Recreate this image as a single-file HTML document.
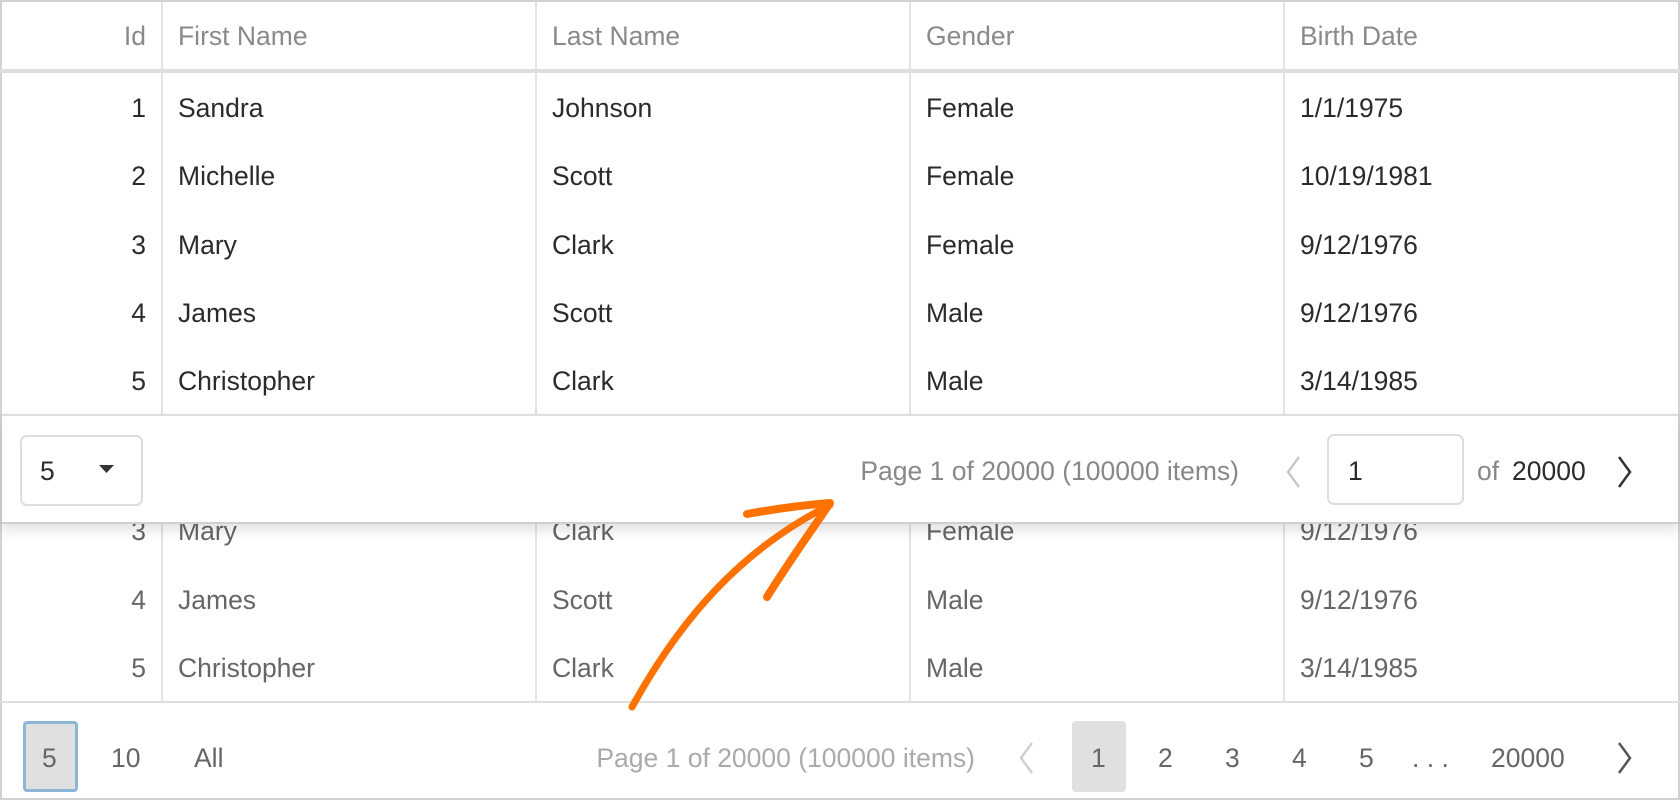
<!DOCTYPE html>
<html><head><meta charset="utf-8"><style>
*{margin:0;padding:0;box-sizing:border-box}
body{width:1680px;height:800px;background:#fff;font-family:"Liberation Sans",sans-serif;position:relative;overflow:hidden}
.frame{position:absolute;left:0;top:0;width:1680px;height:800px;border:2px solid #d2d2d2}
.t{position:absolute;font-size:26.5px;line-height:30px;white-space:nowrap;transform:translateY(-50%)}
.h{color:#8a8a8a}
.d{color:#2b2b2b}
.f{color:#666}
.vl{position:absolute;width:2px;background:#e4e4e4}
.hl{position:absolute;left:0;width:1680px;background:#dedede}
.r{text-align:right}
svg{position:absolute}
</style></head><body>
<div class="frame"></div>
<div class="vl" style="left:161px;top:2px;height:413px"></div>
<div class="vl" style="left:535px;top:2px;height:413px"></div>
<div class="vl" style="left:909px;top:2px;height:413px"></div>
<div class="vl" style="left:1283px;top:2px;height:413px"></div>
<div class="vl" style="left:161px;top:523px;height:179px"></div>
<div class="vl" style="left:535px;top:523px;height:179px"></div>
<div class="vl" style="left:909px;top:523px;height:179px"></div>
<div class="vl" style="left:1283px;top:523px;height:179px"></div>
<div class="hl" style="top:69px;height:4px"></div>
<div class="hl" style="top:701px;height:2px"></div>

<div class="t h r" style="right:1534px;top:36px">Id</div>
<div class="t h" style="left:178px;top:36px">First Name</div>
<div class="t h" style="left:552px;top:36px">Last Name</div>
<div class="t h" style="left:926px;top:36px">Gender</div>
<div class="t h" style="left:1300px;top:36px">Birth Date</div>

<div class="t d" style="right:1534px;top:108px">1</div><div class="t d" style="left:178px;top:108px">Sandra</div><div class="t d" style="left:552px;top:108px">Johnson</div><div class="t d" style="left:926px;top:108px">Female</div><div class="t d" style="left:1300px;top:108px">1/1/1975</div>
<div class="t d" style="right:1534px;top:176px">2</div><div class="t d" style="left:178px;top:176px">Michelle</div><div class="t d" style="left:552px;top:176px">Scott</div><div class="t d" style="left:926px;top:176px">Female</div><div class="t d" style="left:1300px;top:176px">10/19/1981</div>
<div class="t d" style="right:1534px;top:245px">3</div><div class="t d" style="left:178px;top:245px">Mary</div><div class="t d" style="left:552px;top:245px">Clark</div><div class="t d" style="left:926px;top:245px">Female</div><div class="t d" style="left:1300px;top:245px">9/12/1976</div>
<div class="t d" style="right:1534px;top:313px">4</div><div class="t d" style="left:178px;top:313px">James</div><div class="t d" style="left:552px;top:313px">Scott</div><div class="t d" style="left:926px;top:313px">Male</div><div class="t d" style="left:1300px;top:313px">9/12/1976</div>
<div class="t d" style="right:1534px;top:381px">5</div><div class="t d" style="left:178px;top:381px">Christopher</div><div class="t d" style="left:552px;top:381px">Clark</div><div class="t d" style="left:926px;top:381px">Male</div><div class="t d" style="left:1300px;top:381px">3/14/1985</div>

<div class="t f" style="right:1534px;top:531px">3</div><div class="t f" style="left:178px;top:531px">Mary</div><div class="t f" style="left:552px;top:531px">Clark</div><div class="t f" style="left:926px;top:531px">Female</div><div class="t f" style="left:1300px;top:531px">9/12/1976</div>
<div class="t f" style="right:1534px;top:600px">4</div><div class="t f" style="left:178px;top:600px">James</div><div class="t f" style="left:552px;top:600px">Scott</div><div class="t f" style="left:926px;top:600px">Male</div><div class="t f" style="left:1300px;top:600px">9/12/1976</div>
<div class="t f" style="right:1534px;top:668px">5</div><div class="t f" style="left:178px;top:668px">Christopher</div><div class="t f" style="left:552px;top:668px">Clark</div><div class="t f" style="left:926px;top:668px">Male</div><div class="t f" style="left:1300px;top:668px">3/14/1985</div>

<div style="position:absolute;left:2px;top:414px;width:1676px;height:110px;background:#fff;border-top:2px solid #dedede;border-bottom:2px solid #d0d0d0;box-shadow:0 6px 12px rgba(0,0,0,0.12)"></div>
<div style="position:absolute;left:20px;top:435px;width:123px;height:71px;border:2px solid #ddd;border-radius:7px"></div>
<div class="t d" style="left:40px;top:471px">5</div>
<svg style="left:99px;top:465px" width="16" height="9"><path d="M0 0H15L7.5 8Z" fill="#333"/></svg>
<div class="t" style="right:441px;top:471px;color:#888">Page 1 of 20000 (100000 items)</div>
<svg style="left:1283px;top:455px" width="20" height="34"><path d="M16 2L5 17L16 32" fill="none" stroke="#c8c8c8" stroke-width="2.5"/></svg>
<div style="position:absolute;left:1327px;top:434px;width:137px;height:71px;border:2px solid #ddd;border-radius:7px"></div>
<div class="t d" style="left:1348px;top:471px">1</div>
<div class="t" style="left:1477px;top:471px;color:#888">of</div>
<div class="t d" style="left:1512px;top:471px">20000</div>
<svg style="left:1615px;top:455px" width="20" height="34"><path d="M4 2L15 17L4 32" fill="none" stroke="#333" stroke-width="2.5"/></svg>

<div style="position:absolute;left:23px;top:721px;width:55px;height:71px;background:#e0e0e0;border:3px solid #8db5d8;border-radius:4px"></div>
<div class="t f" style="left:42px;top:758px">5</div>
<div class="t f" style="left:111px;top:758px">10</div>
<div class="t f" style="left:194px;top:758px">All</div>
<div class="t" style="right:705px;top:758px;color:#aaa">Page 1 of 20000 (100000 items)</div>
<svg style="left:1016px;top:741px" width="20" height="34"><path d="M16 2L5 17L16 32" fill="none" stroke="#d0d0d0" stroke-width="2.5"/></svg>
<div style="position:absolute;left:1072px;top:721px;width:54px;height:71px;background:#e0e0e0;border-radius:4px"></div>
<div class="t f" style="left:1091px;top:758px">1</div>
<div class="t f" style="left:1158px;top:758px">2</div>
<div class="t f" style="left:1225px;top:758px">3</div>
<div class="t f" style="left:1292px;top:758px">4</div>
<div class="t f" style="left:1359px;top:758px">5</div>
<div class="t f" style="left:1412px;top:758px">. . .</div>
<div class="t f" style="left:1491px;top:758px">20000</div>
<svg style="left:1615px;top:741px" width="20" height="34"><path d="M4 2L15 17L4 32" fill="none" stroke="#555" stroke-width="2.5"/></svg>

<svg style="left:0;top:0" width="1680" height="800">
<path d="M632 707C680 620 740 550 830 505" fill="none" stroke="#ff7200" stroke-width="7" stroke-linecap="round"/>
<path d="M747 514C780 508 805 505 830 503C812 530 790 560 767 597" fill="none" stroke="#ff7200" stroke-width="8" stroke-linecap="round" stroke-linejoin="round"/>
</svg>
</body></html>
